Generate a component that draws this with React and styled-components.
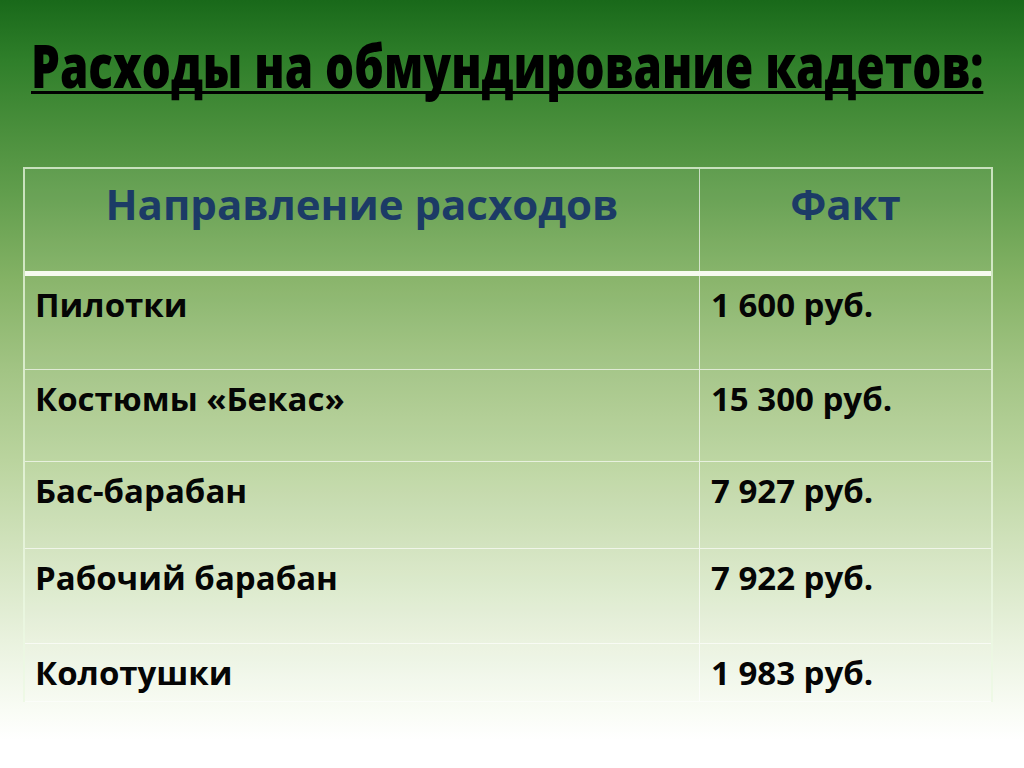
import React from "react";
import styled, { createGlobalStyle } from "styled-components";

const Global = createGlobalStyle`
  html, body { margin: 0; padding: 0; }
  body { font-family: "Open Sans", "Noto Sans", sans-serif; }
`;

const Slide = styled.div`
  width: 1024px;
  height: 768px;
  overflow: hidden;
  box-sizing: border-box;
  padding-top: 35px;
  background: linear-gradient(
    to bottom,
    #19691a 0px,
    #2f7f2a 60px,
    #4a8f3c 130px,
    #609d4c 190px,
    #84b265 280px,
    #a2c484 370px,
    #bad49e 460px,
    #d2e3be 550px,
    #e9f2de 640px,
    #f9fcf5 710px,
    #ffffff 740px
  );
`;

const TitleWrap = styled.div`
  padding-left: 31px;
  height: 60px;
`;

const Title = styled.h1`
  margin: 0;
  display: inline-block;
  white-space: nowrap;
  font-family: "Open Sans", "Noto Sans", sans-serif;
  font-weight: 800;
  font-size: 60px;
  line-height: 60px;
  color: #000;
  text-decoration: underline;
  text-decoration-thickness: 3px;
  text-underline-offset: 3px;
  text-decoration-skip-ink: none;
  transform: scaleX(0.762);
  transform-origin: left center;
`;

const Table = styled.div`
  margin-top: 72px;
  margin-left: 23px;
  width: 970px;
  box-sizing: border-box;
  border: 2px solid rgba(235, 248, 225, 0.75);
  border-bottom: none;
  background: rgba(255, 255, 255, 0.05);
`;

const Row = styled.div`
  display: grid;
  grid-template-columns: 675px 1fr;
  height: ${(p) => p.$h}px;
  border-bottom: ${(p) =>
    p.$head
      ? "5px solid #f6fbef"
      : p.$last
      ? "1px solid rgba(255,255,255,0.5)"
      : "1.5px solid rgba(255, 255, 255, 0.65)"};
`;

const Cell = styled.div`
  box-sizing: border-box;
  padding: 9px 10px 0 ${(p) => (p.$first ? 10 : 11)}px;
  border-right: ${(p) => (p.$first ? "1.5px solid rgba(255,255,255,0.65)" : "none")};
  font-family: "Open Sans", "Noto Sans", sans-serif;
  font-weight: 700;
  font-size: 33px;
  line-height: 1.2;
  color: #050505;
  white-space: nowrap;
`;

const HeadCell = styled(Cell)`
  padding: 10px 0 0;
  text-align: center;
  font-size: 42px;
  color: #1c3b66;
`;

const rows = [
  ["Пилотки", "1 600 руб.", 93],
  ["Костюмы «Бекас»", "15 300 руб.", 90.5],
  ["Бас-барабан", "7 927 руб.", 86.5],
  ["Рабочий барабан", "7 922 руб.", 93.5],
  ["Колотушки", "1 983 руб.", 57],
];

export default function App() {
  return (
    <>
      <Global />
      <Slide>
        <TitleWrap>
          <Title>Расходы на обмундирование кадетов:</Title>
        </TitleWrap>
        <Table>
          <Row $head $h={102}>
            <HeadCell $first>Направление расходов</HeadCell>
            <HeadCell>Факт</HeadCell>
          </Row>
          {rows.map(([name, value, h], i) => (
            <Row key={name} $h={h} $last={i === rows.length - 1}>
              <Cell $first>{name}</Cell>
              <Cell>{value}</Cell>
            </Row>
          ))}
        </Table>
      </Slide>
    </>
  );
}
